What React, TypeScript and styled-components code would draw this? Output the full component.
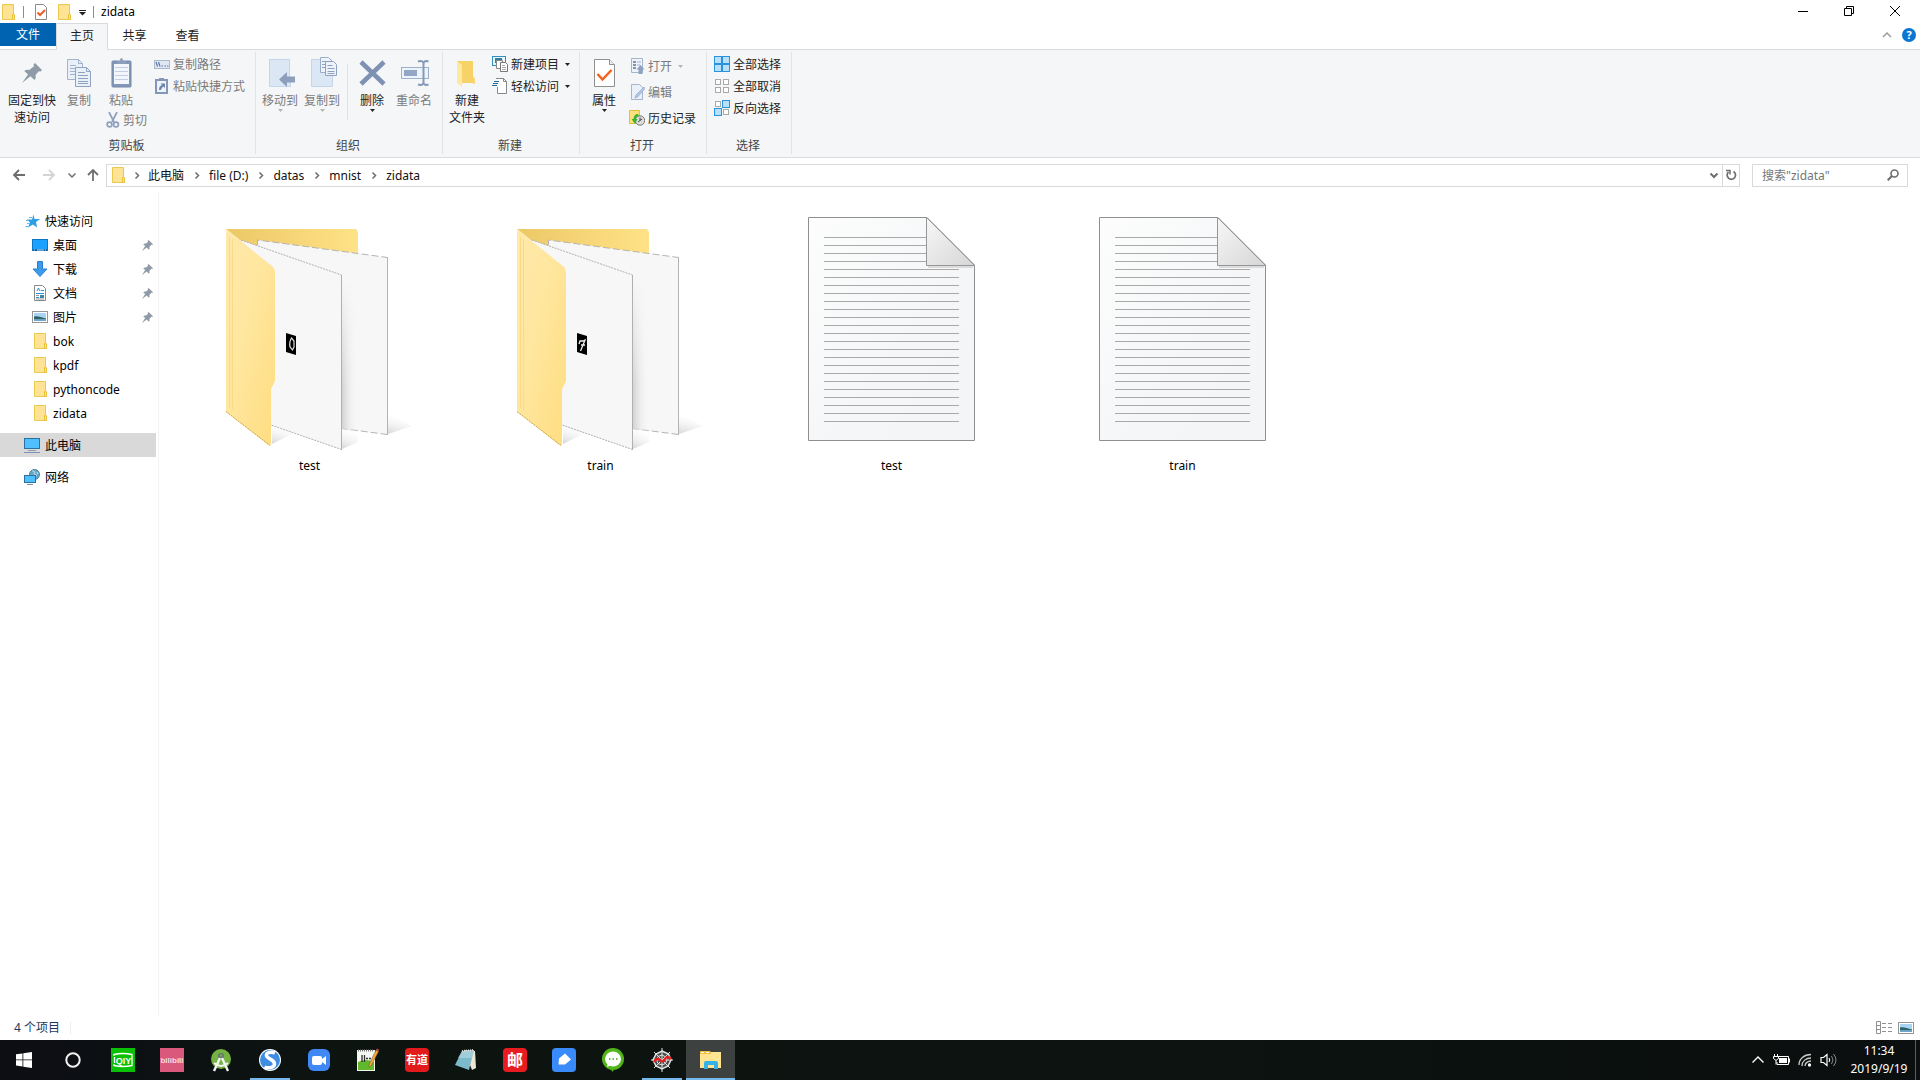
import React from 'react';
import styled, { createGlobalStyle, css } from 'styled-components';

const GlobalStyle = createGlobalStyle`
  * { box-sizing: border-box; }
  html, body { margin: 0; padding: 0; }
  body, button, input {
    font-family: "Noto Sans", "Noto Sans CJK SC", sans-serif;
    font-size: 12px;
  }
  body { color: #000; }
  button { border: 0; padding: 0; margin: 0; background: none; color: inherit; line-height: 17px; cursor: default; }
  svg { display: block; flex: none; }
  a { color: inherit; text-decoration: none; }
  ul { list-style: none; margin: 0; padding: 0; }
`;

/* ---------- small drawings ---------- */

const FolderIcon = () => (
  <svg width="16" height="18" viewBox="0 0 16 18">
    <path d="M2.500 1.500h11v11l1 .5v3.500h-12z" fill="#ffe394" stroke="#ebc850" />
    <path d="M12.500 16.500V12l1-1.500 1 1.500v4.500z" fill="#ffe394" stroke="#e8c13c" />
  </svg>
);

const PropertiesIcon = () => (
  <svg width="32" height="32" viewBox="0 0 32 32">
    <path d="M6.500 2.500h15l5 5v22h-20z" fill="#fff" stroke="#8f8f8f" />
    <path d="M21.500 2.500v5h5" fill="#eee" stroke="#8f8f8f" />
    <path d="M9.500 17l5 5.500 9-9.500" fill="none" stroke="#f8601c" strokeWidth="2.500" />
  </svg>
);

const PinShape = ({ size }: { size: number }) => (
  <svg width={size} height={size} viewBox="0 0 20 20">
    <path d="M12 0l8 7.500-1.500 1.500-1.700-.3-3.300 3.800c.6 2.300.2 4-1 5l-4-3.800L0 20l5.700-9L2.300 7.500c1.400-1.300 3-1.500 5-1L11 3.200l-.5-1.700z" fill="#8f9ba6" />
  </svg>
);

const PinLarge = () => (
  <svg width="32" height="32" viewBox="-6 -6 32 32">
    <path d="M13 0l7 7-1.500 1.500-1.700-.3-3.300 3.800c.6 2.300.2 4-1 5l-4-3.800L0 20l6-8.500L2.300 8c1.400-1.300 3-1.500 5-1L12 3.200l-.5-1.700z" fill="#8f9ba6" />
  </svg>
);

const CopyIcon = () => (
  <svg width="32" height="32" viewBox="0 0 32 32" fill="#eaf0f8" stroke="#a3b3cd">
    <path d="M4.500 2.500h11l4 4v16h-15z" />
    <path d="M15.500 2.500v4h4M7 8.500h6M7 11.500h6M7 14.500h6M7 17.500h5" fill="none" />
    <path d="M12.500 10.500h11l4 4v15h-15z" stroke="#8fa2c2" />
    <path d="M23.500 10.500v4h4M15 15.500h7M15 18.500h10M15 21.500h10M15 24.500h10M15 26.500h10" fill="none" stroke="#8fa2c2" />
  </svg>
);

const PasteIcon = () => (
  <svg width="32" height="32" viewBox="0 0 32 32">
    <rect x="7" y="4" width="19" height="26" rx="1" fill="#8497b8" stroke="#7389ad" />
    <rect x="9" y="7" width="15" height="20" fill="#f3f7fc" />
    <path d="M12 7V4h3c0-4 3-4 3 0h3v3z" fill="#8c9fbd" />
    <path d="M10 10.500h13M10 14.500h13M10 18.500h13M10 22.500h13" stroke="#c3cfe1" />
  </svg>
);

const ScissorsIcon = () => (
  <svg width="14" height="16" viewBox="0 0 14 16" fill="none" stroke="#8ea0bd" strokeWidth="1.700">
    <path d="M3 0l5 10M11 0L6 10" />
    <circle cx="3.500" cy="12.500" r="2.400" />
    <circle cx="10" cy="12.500" r="2.400" />
  </svg>
);

const PathIcon = () => (
  <svg width="16" height="16" viewBox="0 0 16 16">
    <rect x=".5" y="4.500" width="15" height="8" fill="#dfe7f3" stroke="#aab9d0" />
    <path d="M2 6l1.500 4.500M4.500 6L6 10.500M7.500 10H9M10.500 10H12M13 10h1.500" stroke="#5f78a4" strokeWidth="1.200" />
  </svg>
);

const ShortcutIcon = () => (
  <svg width="16" height="16" viewBox="0 0 16 16">
    <rect x="2" y="2" width="11" height="13" fill="#eef3fa" stroke="#8497b8" strokeWidth="2" />
    <rect x="5" y="0" width="5" height="3" fill="#8497b8" />
    <path d="M5 12c0-3 1-4 3-5L6.500 5.500H11V10L9.500 8.500C8 9.500 7.500 10.500 7 12z" fill="#6d84ab" />
  </svg>
);

const MoveToIcon = () => (
  <svg width="32" height="32" viewBox="1 0 32 32">
    <path d="M6.500 2.500h20v16l1 1v10h-21z" fill="#dce7f5" stroke="#c6d5e9" />
    <path d="M16 22.500l8-7.500v4.500h8v6h-8V30z" fill="#8d9fbd" />
  </svg>
);

const CopyToIcon = () => (
  <svg width="32" height="32" viewBox="1 0 32 32">
    <path d="M6.500 2.500h20v16l1 1v10h-21z" fill="#dce7f5" stroke="#c6d5e9" />
    <path d="M15.500.5h8l3 3v12h-11z" fill="#eef3fa" stroke="#9badc9" />
    <path d="M20.500 4.500h8l3 3v11h-11z" fill="#eef3fa" stroke="#8ea1c0" />
    <path d="M17 4.500h4M17 7.500h3M17 10.500h3M22.500 8.500h5M22.500 11.500h7M22.500 14.500h7M22.500 16.500h7" stroke="#8ea1c0" />
  </svg>
);

const DeleteIcon = () => (
  <svg width="32" height="32" viewBox="0 0 32 32">
    <path d="M5 5l23 22M28 5L5 27" stroke="#7e91b3" strokeWidth="4.500" />
  </svg>
);

const RenameIcon = () => (
  <svg width="32" height="32" viewBox="0 0 32 32">
    <rect x="3.500" y="10.500" width="27" height="11" fill="#edf3fa" stroke="#9fb0ca" />
    <rect x="6" y="13" width="13" height="6" fill="#93a6c4" />
    <path d="M25.500 5v22M20 4.500c3-1 5 0 5.500 1.500.5-1.500 2.500-2.500 5-1.500M20 27.500c3 1 5 0 5.500-1.500.5 1.500 2.500 2.500 5 1.500" fill="none" stroke="#8598b9" strokeWidth="2" />
  </svg>
);

const NewFolderIcon = () => (
  <svg width="32" height="32" viewBox="2 0 32 32">
    <path d="M8 4h16v16l2 2v4H10z" fill="#f6d267" />
    <path d="M8 4l5 4v22l-5-4z" fill="#ffe8a0" />
    <path d="M13 27h11v-8l2 3v5" fill="#f9d876" />
  </svg>
);

const NewItemIcon = () => (
  <svg width="16" height="16" viewBox="0 0 16 16">
    <rect x=".5" y=".5" width="13" height="9" fill="#e7f5fd" stroke="#2f8fbf" />
    <rect x="3" y="2" width="7" height="5" fill="#3a7c94" />
    <path d="M4.500 4.500h6v8h-6z" fill="#fff" stroke="#888" />
    <path d="M8.500 6.500h5l2 2v7h-7z" fill="#fff" stroke="#777" />
    <path d="M10 9.500h3M10 11.500h4M10 13.500h4" stroke="#aaa" />
  </svg>
);

const EasyAccessIcon = () => (
  <svg width="16" height="16" viewBox="0 0 16 16">
    <path d="M5.500.5h6l3 3v12h-9z" fill="#fff" />
    <path d="M4 .5h7.500l3 3v12h-9V9M11.500.5v3h3" fill="none" stroke="#888" />
    <path d="M2 3.500h5M1 5.500h5M0 7.500h5" stroke="#1c6ca1" />
  </svg>
);

const OpenIcon = () => (
  <svg width="16" height="16" viewBox="0 0 16 16">
    <path d="M2.500.5h11v14h-11z" fill="#eef3fa" stroke="#a5b5ce" />
    <path d="M4 4h3M4 7h3M4 10h3" stroke="#7f94b7" strokeWidth="2" />
    <path d="M8 4h4M8 7h3" stroke="#a5b5ce" />
    <path d="M11.500 7l4 4.500h-2V16h-4v-4.500h-2z" fill="#8ea1c0" />
  </svg>
);

const EditIcon = () => (
  <svg width="16" height="16" viewBox="0 0 16 16">
    <path d="M2.500.5h8l3 3v12h-11z" fill="#e9f0f9" stroke="#a5b5ce" />
    <path d="M6 14l1-3 8-8 1 1.500-7.500 8.500z" fill="#b7c9e2" stroke="#8ea5c8" strokeWidth=".7" />
  </svg>
);

const HistoryIcon = () => (
  <svg width="16" height="16" viewBox="0 0 16 16">
    <path d="M.5.5h10v13H.5z" fill="#ffe17b" stroke="#e3bd3b" />
    <circle cx="11" cy="10.500" r="4.700" fill="#ddd" stroke="#777" />
    <path d="M11 7.500v3l-2 1.500M11 10.500l2-1.500" fill="none" stroke="#444" />
    <path d="M9 4C6 4 4.500 6 4.500 9H2.500l3.500 5 2.500-5H7c0-2 .8-3 3-3z" fill="#3bb32e" />
  </svg>
);

const TileIcon = ({ on }: { on: boolean[] }) => (
  <svg width="16" height="16" viewBox="0 0 16 16">
    {on.map((active, i) => {
      const x = (i % 2) * 8;
      const y = Math.floor(i / 2) * 8;
      return active ? (
        <rect key={i} x={x + 0.5} y={y + 0.5} width="7" height="7" fill="#b9e0fb" stroke="#2b93dd" />
      ) : (
        <rect key={i} x={x + 1.5} y={y + 1.5} width="5" height="5" fill="#fff" stroke="#a9a9a9" />
      );
    })}
  </svg>
);

const Caret = ({ faint }: { faint?: boolean }) => (
  <svg width="5" height="3" viewBox="0 0 5 3">
    <path d="M0 0h5L2.500 3z" fill={faint ? '#b4b4b4' : '#222'} />
  </svg>
);

const Chevron = ({ dir, w = 2 }: { dir: 'right' | 'down' | 'up'; w?: number }) => {
  const d = { right: 'M3.500 2.500L6.500 5.500 3.500 8.500', down: 'M1.500 3.500L5 7 8.500 3.500', up: 'M1 7L5 3 9 7' }[dir];
  return (
    <svg width="10" height="10" viewBox="0 0 10 10">
      <path d={d} fill="none" stroke="currentColor" strokeWidth={w} />
    </svg>
  );
};

const Arrow = ({ dir }: { dir: 'left' | 'right' | 'up' }) => {
  const turn = { left: 0, up: 90, right: 180 }[dir];
  return (
    <svg width="14" height="14" viewBox="0 0 14 14">
      <path d="M13 7H2M7 2L2 7l5 5" fill="none" stroke="currentColor" strokeWidth="1.800" transform={`rotate(${turn} 7 7)`} />
    </svg>
  );
};

const StarIcon = () => (
  <svg width="16" height="16" viewBox="0 0 16 16">
    <path d="M9.500 1.500l1 4.500H16l-4 3 1 5.500L9 11.500l-5 3 2-5L3 6.500h5z" fill="#2b9ee8" />
    <path d="M5 4.500h3M2 7.500h3M3 10.500h3M1.500 13.500H5" stroke="#62b9f0" />
  </svg>
);

const DesktopIcon = () => (
  <svg width="16" height="16" viewBox="0 0 16 16">
    <rect x=".5" y="2.500" width="15" height="11" fill="#1ba1ff" stroke="#0c77c6" />
    <path d="M1 13h14" stroke="#063a66" />
    <path d="M2 13h1M5 13h7M13 13h1" stroke="#bfe3ff" />
  </svg>
);

const DownloadIcon = () => (
  <svg width="16" height="16" viewBox="0 0 16 16">
    <path d="M5.500.5h5V8h4.500L8 15.500 1 8h4.500z" fill="#3b9aeb" stroke="#2a80cf" />
  </svg>
);

const DocumentIcon = () => (
  <svg width="16" height="16" viewBox="0 0 16 16">
    <path d="M2.500.5h8l3 3v12h-11z" fill="#fff" stroke="#8a8a8a" />
    <path d="M5 6l1.500-3L8 6M9 5.500h3M4 8.500h8M4 12.500h3" fill="none" stroke="#2f8fd0" />
    <path d="M4 10.500h3M4 14h8" stroke="#999" />
    <rect x="8" y="10" width="4" height="3" fill="#3b86a8" />
  </svg>
);

const PictureIcon = () => (
  <svg width="16" height="16" viewBox="0 0 16 16">
    <rect x=".5" y="2.500" width="15" height="11" fill="#fff" stroke="#969696" />
    <rect x="2" y="4" width="12" height="8" fill="#a9d3f5" />
    <path d="M2 7.500c4-1 7 1 12 2v1H2z" fill="#2c6465" />
    <path d="M2 10.500h12V12H2z" fill="#6fa6cf" />
  </svg>
);

const ComputerIcon = () => (
  <svg width="16" height="16" viewBox="0 0 16 16">
    <rect x=".5" y="1.500" width="15" height="10" fill="#4fc0ff" stroke="#2a719c" />
    <path d="M4 13.500h8" stroke="#8aa0b5" />
    <path d="M0 15.500h16" stroke="#7d92b2" />
  </svg>
);

const NetworkIcon = () => (
  <svg width="16" height="16" viewBox="0 0 16 16">
    <circle cx="10.500" cy="5.500" r="5" fill="#66a9c9" stroke="#4a7f9e" />
    <path d="M8 1.500l3 1.500-1 2 3 1.500M13 3l1 2" stroke="#c2e0ee" fill="none" />
    <rect x=".5" y="6.500" width="11" height="7" fill="#4fc0ff" stroke="#2a719c" />
    <path d="M3 15.500h6" stroke="#7d92b2" />
  </svg>
);

/* ---------- large thumbnails ---------- */

const FolderThumb = ({ id, digit }: { id: string; digit: React.ReactNode }) => (
  <svg width="256" height="256" viewBox="1 0 256 256">
    <defs>
      <linearGradient id={`${id}-back`} x1="0" x2="1" y1="0" y2="0">
        <stop offset="0" stopColor="#ecc866" />
        <stop offset="1" stopColor="#ffe287" />
      </linearGradient>
      <linearGradient id={`${id}-front`} x1="0" x2="1" y1="0" y2="1">
        <stop offset="0" stopColor="#ffe9ab" />
        <stop offset=".4" stopColor="#ffe7a0" />
        <stop offset="1" stopColor="#ffdd80" />
      </linearGradient>
      <linearGradient id={`${id}-side`} x1="0" x2="1" y1="0" y2="0">
        <stop offset="0" stopColor="#d2d2d2" />
        <stop offset="1" stopColor="#f7f7f7" stopOpacity="0" />
      </linearGradient>
      <linearGradient id={`${id}-mask`} x1="0" x2="0" y1="0" y2="1">
        <stop offset="0" stopColor="#f7f7f7" />
        <stop offset=".7" stopColor="#f7f7f7" stopOpacity="0" />
      </linearGradient>
      <linearGradient id={`${id}-floor`} x1=".3" x2=".6" y1="1" y2="0">
        <stop offset="0" stopColor="#dcdcdc" />
        <stop offset="1" stopColor="#fff" stopOpacity="0" />
      </linearGradient>
    </defs>
    <path d="M207 212l24 12-24 8z" fill={`url(#${id}-floor)`} />
    <path d="M161 225l16 3v12l-16 7z" fill={`url(#${id}-floor)`} />
    <path d="M91 222l24 8-24 12z" fill={`url(#${id}-floor)`} />
    <path d="M45 27h130l2 3v25H80z" fill={`url(#${id}-back)`} />
    <path d="M76.500 43v-5l130 17.500v177l-46-6z" fill="#f7f7f7" />
    <path d="M76.500 43v-5l130 17.500M206.500 232.500l-46-6" fill="none" stroke="#b4b4b4" strokeDasharray="7 3" />
    <path d="M206.500 55v178" stroke="#b4b4b4" />
    <path d="M161 78h16v152l-16-3z" fill={`url(#${id}-side)`} />
    <path d="M161 78h16v152l-16-3z" fill={`url(#${id}-mask)`} />
    <path d="M60 38l100.500 35v174.500L90 223 60 200z" fill="#f7f7f7" />
    <path d="M60 38l100.500 35M160.500 247.500L90 223" stroke="#b0b0b0" strokeDasharray="2 1" />
    <path d="M160.500 73v175" stroke="#b0b0b0" />
    <path d="M45 27l47 38q2 2 2 5v109l-4 8v54q0 3-2 2.500L45 210z" fill={`url(#${id}-front)`} />
    <path d="M48.500 35v171M51.500 37v171" stroke="#f8db83" />
    <path d="M45 209.500l44 34" stroke="#c8a654" strokeDasharray="2 1" />
    <path d="M105 131l10 3v19l-10-3z" fill="#000" />
    {digit}
  </svg>
);

const RULES = Array.from({ length: 24 }, (_, i) => 35.5 + i * 8);

const TextThumb = ({ id }: { id: string }) => (
  <svg width="256" height="256" viewBox="0 0 256 256">
    <defs>
      <linearGradient id={`${id}-sheet`} x1="0" x2="1" y1="0" y2="1">
        <stop offset="0" stopColor="#fcfdfc" />
        <stop offset=".6" stopColor="#f5f6f8" />
        <stop offset="1" stopColor="#f4f5f7" />
      </linearGradient>
      <linearGradient id={`${id}-fold`} x1="0" x2="1" y1="0" y2="1">
        <stop offset="0" stopColor="#f7f7f7" />
        <stop offset="1" stopColor="#d6d6d6" />
      </linearGradient>
    </defs>
    <path d="M44.500 15.500H163l47.500 47.500v175.500h-166z" fill={`url(#${id}-sheet)`} stroke="#8f8f8f" />
    {RULES.map((y, i) => (
      <path key={y} d={`M60 ${y}H${i < 4 ? 162 : 195}`} stroke="#a9a9a9" />
    ))}
    <path d="M164 65h45" stroke="#dcdcdc" strokeWidth="2" />
    <path d="M162.500 15.500v48h48z" fill={`url(#${id}-fold)`} stroke="#979797" />
  </svg>
);

/* ---------- window chrome ---------- */

const Screen = styled.div`
  min-height: 100vh;
  display: flex;
  flex-direction: column;
  background: #fff;
`;

const TitleBar = styled.header`
  height: 23px;
  display: flex;
  align-items: center;
  padding-right: 2px;
`;

const QuickTools = styled.div`
  display: flex;
  align-items: center;
  gap: 7px;
  flex: 1;
`;

const ToolDivider = styled.span`
  width: 1px;
  height: 12px;
  background: #8c8c8c;
`;

const WindowTitle = styled.h1`
  margin: 0;
  font-size: 12px;
  font-weight: 400;
  line-height: 17px;
`;

const WindowButton = styled.button`
  width: 46px;
  height: 22px;
  display: grid;
  place-items: center;
`;

const TabRow = styled.nav`
  height: 27px;
  display: flex;
  border-bottom: 1px solid #dadbdc;
`;

const Tab = styled.button<{ $kind?: 'file' | 'active' }>`
  width: 53px;
  height: 26px;
  padding-bottom: 2px;
  color: #222;
  ${({ $kind }) => $kind === 'file' && css`
    width: 56px;
    height: 23px;
    padding: 0;
    color: #fff;
    background: #0063b1;
  `}
  ${({ $kind }) => $kind === 'active' && css`
    width: 52px;
    height: 27px;
    padding-bottom: 4px;
    background: #f5f6f7;
    border: 1px solid #dadbdc;
    border-bottom: 0;
  `}
`;

const TabTools = styled.div`
  margin-left: auto;
  display: flex;
  align-items: center;
  gap: 10px;
  padding: 0 4px 2px 0;
  color: #9a9a9a;
`;

const Ribbon = styled.section`
  height: 108px;
  display: flex;
  padding: 2px 0 3px;
  background: #f5f6f7;
  border-bottom: 1px solid #dadbdc;
`;

const Group = styled.div<{ $width: number }>`
  width: ${({ $width }) => $width}px;
  display: flex;
  flex-direction: column;
  border-right: 1px solid #e2e3e4;
`;

const GroupBody = styled.div<{ $inset?: number }>`
  flex: 1;
  display: flex;
  align-items: flex-start;
  padding: 1px 0 0 ${({ $inset = 0 }) => $inset}px;
`;

const GroupLabel = styled.div`
  height: 17px;
  padding-right: 2px;
  line-height: 17px;
  text-align: center;
  color: #444;
`;

const LargeButton = styled.button<{ $width?: number; $dim?: boolean }>`
  width: ${({ $width = 42 }) => $width}px;
  display: flex;
  flex-direction: column;
  align-items: center;
  padding-top: 4px;
  color: ${({ $dim }) => ($dim ? '#7b7b7b' : '#222')};
  white-space: nowrap;
  span { margin-top: 3px; }
`;

const Stack = styled.div`
  display: flex;
  flex-direction: column;
  align-items: flex-start;
`;

const SmallButton = styled.button<{ $height?: number; $indent?: number; $dim?: boolean }>`
  height: ${({ $height = 22 }) => $height}px;
  display: flex;
  align-items: center;
  gap: 3px;
  padding-left: ${({ $indent = 4 }) => $indent}px;
  white-space: nowrap;
  color: ${({ $dim }) => ($dim ? '#7b7b7b' : '#222')};
  span + svg { margin-left: 3px; }
`;

const InnerDivider = styled.span`
  width: 1px;
  height: 56px;
  margin: 11px 3px 0 4px;
  background: #dfe0e1;
`;

const AddressRow = styled.div`
  height: 34px;
  display: flex;
  align-items: center;
  padding: 0 12px 0 4px;
  color: #6e6e6e;
`;

const NavButton = styled.button<{ $width: number; $faint?: boolean }>`
  width: ${({ $width }) => $width}px;
  height: 22px;
  display: grid;
  place-items: center;
  color: ${({ $faint }) => ($faint ? '#d4d4d4' : '#6e6e6e')};
`;

const AddressBox = styled.div`
  flex: 1;
  height: 23px;
  display: flex;
  align-items: center;
  padding-left: 3px;
  border: 1px solid #d9d9d9;
`;

const Crumbs = styled.ul`
  flex: 1;
  display: flex;
  li { display: flex; align-items: center; line-height: 17px; }
  a { color: #111; }
`;

const CrumbChevron = styled.span`
  width: 25px;
  display: grid;
  place-items: center;
  li:first-child > & { width: 22px; }
`;

const RefreshButton = styled(NavButton)`
  border-left: 1px solid #d9d9d9;
`;

const SearchBox = styled.label`
  width: 156px;
  height: 23px;
  margin-left: 12px;
  display: flex;
  align-items: center;
  padding: 0 8px 0 9px;
  border: 1px solid #d9d9d9;
  input {
    flex: 1;
    min-width: 0;
    height: 17px;
    padding: 0;
    border: 0;
    outline: 0;
    background: none;
  }
  input::placeholder { color: #767676; opacity: 1; }
`;

/* ---------- body ---------- */

const Body = styled.div`
  flex: 1;
  display: flex;
`;

const Sidebar = styled.nav`
  width: 159px;
  padding: 17px 2px 0 0;
  border-right: 1px solid #f3f3f3;
`;

const SideGroup = styled.ul`
  margin-bottom: 8px;
`;

const SideItem = styled.a<{ $child?: boolean; $selected?: boolean }>`
  height: 24px;
  display: flex;
  align-items: center;
  gap: 5px;
  padding: 0 3px 0 ${({ $child }) => ($child ? 32 : 24)}px;
  background: ${({ $selected }) => ($selected ? '#d9d9d9' : 'transparent')};
  line-height: 17px;
  span { flex: 1; }
`;

const FileGrid = styled.main`
  flex: 1;
  display: grid;
  grid-template-columns: repeat(auto-fill, 291px);
  align-content: start;
  padding: 10px 0 0 5px;
`;

const FileTile = styled.a`
  display: flex;
  flex-direction: column;
  align-items: center;
  line-height: 15px;
`;

const StatusBar = styled.footer`
  height: 24px;
  display: flex;
  align-items: center;
  gap: 6px;
  padding: 0 6px 0 14px;
  color: #1e395b;
`;

const StatusText = styled.span`
  padding-right: 10px;
  border-right: 1px solid #ededed;
  margin-right: auto;
  line-height: 12px;
`;

/* ---------- taskbar ---------- */

const Taskbar = styled.nav`
  height: 40px;
  display: flex;
  background: linear-gradient(90deg, #0d0e14, #0c1410 18%, #0c1310 60%, #0b0f0f);
`;

const TaskButton = styled.button<{ $running?: boolean; $focused?: boolean }>`
  width: 49px;
  height: 40px;
  display: grid;
  place-items: center;
  background: ${({ $focused }) => ($focused ? '#3d4241' : 'none')};
  ${({ $running }) => $running && css`
    background-image: linear-gradient(#76b9ed, #76b9ed);
    background-size: 40px 2px;
    background-position: center bottom;
    background-repeat: no-repeat;
  `}
  ${({ $focused }) => $focused && css`
    background-size: 100% 2px;
  `}
`;

const Tray = styled.div`
  margin-left: auto;
  display: flex;
  align-items: center;
  gap: 8px;
  padding-right: 4px;
  color: #fff;
`;

const Clock = styled.time`
  width: 68px;
  text-align: center;
  line-height: 18px;
`;

const DesktopEdge = styled.span`
  width: 1px;
  height: 40px;
  margin-left: -6px;
  background: #5a5e5d;
`;

const taskIcons: { name: string; running?: boolean; focused?: boolean; art: React.ReactNode }[] = [
  { name: '开始', art: (
    <svg width="18" height="16" viewBox="0 0 18 16"><path d="M0 2.300l6.500-.9v6.100H0zM7.300 1.300L16 0v7.500H7.300zM0 8.300h6.500v6.200L0 13.600zM7.300 8.300H16V16l-8.700-1.300z" fill="#fff" /></svg>
  ) },
  { name: 'Cortana', art: (
    <svg width="20" height="18" viewBox="0 0 20 18"><circle cx="9" cy="9" r="6.700" fill="none" stroke="#f2f2f2" strokeWidth="2" /></svg>
  ) },
  { name: '爱奇艺', art: (
    <svg width="24" height="24" viewBox="0 0 24 24"><rect width="24" height="24" fill="#0bbe06" /><path d="M3 8V6.500q9-2 18 0V8M3 16v1.500q9 2 18 0V16M3.500 9v6M21 8v8" fill="none" stroke="#fff" strokeWidth="1.300" /><text x="12.500" y="15.500" fontSize="9" fontWeight="700" fontFamily="Liberation Sans, sans-serif" fill="#fff" textAnchor="middle">QIY</text></svg>
  ) },
  { name: '哔哩哔哩', art: (
    <svg width="24" height="24" viewBox="0 0 24 24"><rect width="24" height="24" fill="#d9587b" /><text x="12" y="15" fontSize="8" fontWeight="700" fontFamily="Liberation Sans, sans-serif" fill="#f8dce4" textAnchor="middle">bilibili</text></svg>
  ) },
  { name: 'Android Studio', art: (
    <svg width="24" height="24" viewBox="0 0 24 24"><circle cx="12" cy="11" r="10" fill="#74b341" /><circle cx="12" cy="8" r="3" fill="#687076" /><path d="M11 10L5 23M13 10l6 13" stroke="#f4f4f4" strokeWidth="2.400" /><path d="M5 15q7 6 14 0" fill="none" stroke="#f4f4f4" strokeWidth="2" /><circle cx="12" cy="7.500" r="1.300" fill="#74b341" /></svg>
  ) },
  { name: '搜狗浏览器', running: true, art: (
    <svg width="24" height="24" viewBox="0 0 24 24"><circle cx="12" cy="12" r="11" fill="#fff" /><circle cx="12" cy="12" r="10" fill="#3e8de2" /><path d="M17 5c-5-2-9 0-8.500 3 .5 3 8 3 8 8 0 3-5 5-10 3" fill="none" stroke="#fff" strokeWidth="3.500" /></svg>
  ) },
  { name: '会议', art: (
    <svg width="24" height="24" viewBox="0 0 24 24"><rect x="1" y="1" width="22" height="22" rx="6" fill="#4088f5" /><rect x="5" y="8" width="10" height="9" rx="2" fill="#fff" /><path d="M15 11l4-3v9l-4-3z" fill="#fff" /></svg>
  ) },
  { name: '编辑器', art: (
    <svg width="24" height="24" viewBox="0 0 24 24"><path d="M1 2h18v21H1z" fill="#f4f7f0" /><path d="M2 14q8-4 16 0v8H2z" fill="#62b82c" /><path d="M2 2.500h16" stroke="#777" strokeDasharray="1 1" strokeWidth="2" /><path d="M6 7v7M8.500 7v7M10 10.500h2M13 10.500h2" stroke="#333" strokeWidth="1.300" /><path d="M13 17L20 2l2.500 1.500L15 18l-2 1z" fill="#f1a93a" stroke="#865c26" strokeWidth=".6" /><path d="M20 2l1-1.500 2 1-.7 2z" fill="#b44" /></svg>
  ) },
  { name: '有道词典', art: (
    <svg width="24" height="24" viewBox="0 0 24 24"><rect width="24" height="24" rx="4" fill="#e21a1c" /><text x="12" y="16" fontSize="11" fontWeight="700" fontFamily="Noto Sans CJK SC, sans-serif" fill="#fff" textAnchor="middle">有道</text></svg>
  ) },
  { name: '记事本', art: (
    <svg width="24" height="24" viewBox="0 0 24 24"><path d="M10 2l11 1 1 17-4 2z" fill="#ede6d2" /><path d="M8 3l12-1-5 20L1 17z" fill="#7cb9cb" /><path d="M8 3l12-1-2 8L4 10z" fill="#b8dbe3" opacity=".6" /><path d="M8 3l12-1" stroke="#ddd" strokeDasharray="1 1" strokeWidth="2" /></svg>
  ) },
  { name: '邮箱大师', art: (
    <svg width="24" height="24" viewBox="0 0 24 24"><rect width="24" height="24" rx="4" fill="#e81c20" /><text x="12" y="18" fontSize="16" fontWeight="700" fontFamily="Noto Sans CJK SC, sans-serif" fill="#fff" textAnchor="middle">邮</text></svg>
  ) },
  { name: '笔记', art: (
    <svg width="24" height="24" viewBox="0 0 24 24"><rect width="24" height="24" rx="4" fill="#3a8bfa" /><path d="M13 5.500l6 6-6 5H6.500L7 10.500z" fill="#fff" /></svg>
  ) },
  { name: '聊天', art: (
    <svg width="24" height="24" viewBox="0 0 24 24"><circle cx="12" cy="11" r="11" fill="#51b518" /><path d="M8 20l4 4 1-4z" fill="#51b518" /><ellipse cx="12" cy="11" rx="8" ry="7.500" fill="#fff" /><path d="M7 15l-1 4 5-2z" fill="#fff" /><path d="M8 11h1.500M11.500 11H13M15 11h1.500" stroke="#4aa51a" strokeWidth="1.500" /></svg>
  ) },
  { name: 'Spyder', running: true, art: (
    <svg width="24" height="24" viewBox="0 0 24 24" fill="none" stroke="#e4e4e4"><path d="M12 3l6.500 3 2.500 6-3 6-6 3-6-3-3-6 3-6z" fill="#444b4b" strokeWidth="1.500" /><path d="M12 0v24M1 12h22M4 4l16 16M20 4L4 20" /><path d="M12 7l4 2 1 3-1.500 3.500L12 17l-4-1.500L6.500 12 8 8.500z" /><path d="M4 14q3-5 6-2t5-1 6 0" stroke="#e52222" strokeWidth="2.600" /></svg>
  ) },
  { name: '文件资源管理器', running: true, focused: true, art: (
    <svg width="24" height="24" viewBox="0 0 24 24"><path d="M1 3h9l2 1h10v16H1z" fill="#ffe492" /><path d="M1 3h9l2 1v2H1z" fill="#f0bd3e" /><path d="M2 4.500h3M7 4.500h3" stroke="#fff" /><path d="M5 21v-6q0-2 2-2h10q2 0 2 2v6h-4v-4H9v4z" fill="#35b3e9" /></svg>
  ) },
];

const places: { name: string; icon: React.ReactNode; pinned?: boolean }[] = [
  { name: '桌面', icon: <DesktopIcon />, pinned: true },
  { name: '下载', icon: <DownloadIcon />, pinned: true },
  { name: '文档', icon: <DocumentIcon />, pinned: true },
  { name: '图片', icon: <PictureIcon />, pinned: true },
  { name: 'bok', icon: <FolderIcon /> },
  { name: 'kpdf', icon: <FolderIcon /> },
  { name: 'pythoncode', icon: <FolderIcon /> },
  { name: 'zidata', icon: <FolderIcon /> },
];

const crumbs = ['此电脑', 'file (D:)', 'datas', 'mnist', 'zidata'];

const files = [
  { name: 'test', thumb: <FolderThumb id="f1" digit={<path d="M110.500 136q-2.500 4-1.500 9l2.500 3 1.500-3v-6z" fill="none" stroke="#ddd" strokeWidth="1.200" />} /> },
  { name: 'train', thumb: <FolderThumb id="f2" digit={<path d="M107 142l1-3h3l2-1-2 5-2.500 6M109 143h4" fill="none" stroke="#eee" strokeWidth="1.300" />} /> },
  { name: 'test', thumb: <TextThumb id="t1" /> },
  { name: 'train', thumb: <TextThumb id="t2" /> },
];

export default function App() {
  return (
    <Screen>
      <GlobalStyle />
      <TitleBar>
        <QuickTools>
          <FolderIcon />
          <ToolDivider />
          <button aria-label="属性"><svg width="18" height="18" viewBox="-4 -1 18 18"><path d="M.5.5h8l3 3v12H.5z" fill="#fff" stroke="#8a8a8a" /><path d="M2.500 8.500l2.500 2.500 5-5" fill="none" stroke="#f1592a" strokeWidth="2" /></svg></button>
          <button aria-label="新建文件夹"><FolderIcon /></button>
          <button aria-label="自定义"><svg width="7" height="8" viewBox="0 0 7 8"><path d="M0 2.500h7" stroke="#222" /><path d="M0 4h7L3.500 7.500z" fill="#222" /></svg></button>
          <ToolDivider />
          <WindowTitle>zidata</WindowTitle>
        </QuickTools>
        <WindowButton aria-label="最小化"><svg width="10" height="12"><path d="M0 5.500h10" stroke="#000" /></svg></WindowButton>
        <WindowButton aria-label="还原"><svg width="10" height="12" fill="none" stroke="#000"><path d="M.5 2.500h7v7h-7zM2.500 2.500v-2h7v7h-2" /></svg></WindowButton>
        <WindowButton aria-label="关闭"><svg width="10" height="12"><path d="M0 0l10 10M10 0L0 10" stroke="#000" /></svg></WindowButton>
      </TitleBar>

      <TabRow>
        <Tab $kind="file">文件</Tab>
        <Tab $kind="active">主页</Tab>
        <Tab>共享</Tab>
        <Tab>查看</Tab>
        <TabTools>
          <button aria-label="折叠功能区"><Chevron dir="up" w={1.5} /></button>
          <button aria-label="帮助">
            <svg width="14" height="14" viewBox="0 0 14 14"><circle cx="7" cy="7" r="7" fill="#0a76d2" /><text x="7" y="11" fontSize="11" fontWeight="700" fill="#fff" textAnchor="middle">?</text></svg>
          </button>
        </TabTools>
      </TabRow>

      <Ribbon>
        <Group $width={256}>
          <GroupBody>
            <LargeButton $width={64}><PinLarge /><span>固定到快<br />速访问</span></LargeButton>
            <LargeButton $width={30} $dim><CopyIcon /><span>复制</span></LargeButton>
            <Stack>
              <LargeButton $width={54} $dim><PasteIcon /><span>粘贴</span></LargeButton>
              <SmallButton $indent={12} $dim><ScissorsIcon /><span>剪切</span></SmallButton>
            </Stack>
            <Stack>
              <SmallButton $indent={6} $dim><PathIcon />复制路径</SmallButton>
              <SmallButton $indent={6} $dim><ShortcutIcon />粘贴快捷方式</SmallButton>
            </Stack>
          </GroupBody>
          <GroupLabel>剪贴板</GroupLabel>
        </Group>
        <Group $width={187}>
          <GroupBody $inset={3}>
            <LargeButton $dim><MoveToIcon /><span>移动到</span><Caret faint /></LargeButton>
            <LargeButton $dim><CopyToIcon /><span>复制到</span><Caret faint /></LargeButton>
            <InnerDivider />
            <LargeButton><DeleteIcon /><span>删除</span><Caret /></LargeButton>
            <LargeButton $dim><RenameIcon /><span>重命名</span></LargeButton>
          </GroupBody>
          <GroupLabel>组织</GroupLabel>
        </Group>
        <Group $width={137}>
          <GroupBody $inset={3}>
            <LargeButton><NewFolderIcon /><span>新建<br />文件夹</span></LargeButton>
            <Stack>
              <SmallButton><NewItemIcon /><span>新建项目</span><Caret /></SmallButton>
              <SmallButton><EasyAccessIcon /><span>轻松访问</span><Caret /></SmallButton>
            </Stack>
          </GroupBody>
          <GroupLabel>新建</GroupLabel>
        </Group>
        <Group $width={127}>
          <GroupBody $inset={3}>
            <LargeButton><PropertiesIcon /><span>属性</span><Caret /></LargeButton>
            <Stack>
              <SmallButton $height={26} $dim><OpenIcon /><span>打开</span><Caret faint /></SmallButton>
              <SmallButton $height={26} $dim><EditIcon /><span>编辑</span></SmallButton>
              <SmallButton $height={26}><HistoryIcon /><span>历史记录</span></SmallButton>
            </Stack>
          </GroupBody>
          <GroupLabel>打开</GroupLabel>
        </Group>
        <Group $width={85}>
          <GroupBody $inset={3}>
            <Stack>
              <SmallButton><TileIcon on={[true, true, true, true]} /><span>全部选择</span></SmallButton>
              <SmallButton><TileIcon on={[false, false, false, false]} /><span>全部取消</span></SmallButton>
              <SmallButton><TileIcon on={[false, true, true, false]} /><span>反向选择</span></SmallButton>
            </Stack>
          </GroupBody>
          <GroupLabel>选择</GroupLabel>
        </Group>
      </Ribbon>

      <AddressRow>
        <NavButton $width={30} aria-label="后退"><Arrow dir="left" /></NavButton>
        <NavButton $width={30} $faint aria-label="前进"><Arrow dir="right" /></NavButton>
        <NavButton $width={16} aria-label="最近浏览"><Chevron dir="down" w={1.5} /></NavButton>
        <NavButton $width={26} aria-label="上移"><Arrow dir="up" /></NavButton>
        <AddressBox>
          <FolderIcon />
          <Crumbs>
            {crumbs.map((name) => (
              <li key={name}>
                <CrumbChevron><Chevron dir="right" w={1.5} /></CrumbChevron>
                <a href="#">{name}</a>
              </li>
            ))}
          </Crumbs>
          <NavButton $width={16} aria-label="历史地址"><Chevron dir="down" /></NavButton>
          <RefreshButton $width={17} aria-label="刷新">
            <svg width="12" height="12" viewBox="0 0 12 12"><path d="M8.500 2.500A4.200 4.200 0 1 1 3.500 3" fill="none" stroke="currentColor" strokeWidth="1.700" /><path d="M1 1.500h4v4" fill="none" stroke="currentColor" strokeWidth="1.500" /></svg>
          </RefreshButton>
        </AddressBox>
        <SearchBox>
          <input type="text" aria-label="搜索" placeholder={'搜索"zidata"'} />
          <svg width="12" height="12" viewBox="0 0 12 12"><circle cx="7.500" cy="4.500" r="3.500" fill="none" stroke="currentColor" strokeWidth="1.600" /><path d="M5 7L.7 11.300" stroke="currentColor" strokeWidth="2" /></svg>
        </SearchBox>
      </AddressRow>

      <Body>
        <Sidebar>
          <SideGroup>
            <li><SideItem href="#"><StarIcon /><span>快速访问</span></SideItem></li>
            {places.map((place) => (
              <li key={place.name}>
                <SideItem href="#" $child>
                  {place.icon}
                  <span>{place.name}</span>
                  {place.pinned && <PinShape size={11} />}
                </SideItem>
              </li>
            ))}
          </SideGroup>
          <SideGroup>
            <li><SideItem href="#" $selected><ComputerIcon /><span>此电脑</span></SideItem></li>
          </SideGroup>
          <SideGroup>
            <li><SideItem href="#"><NetworkIcon /><span>网络</span></SideItem></li>
          </SideGroup>
        </Sidebar>
        <FileGrid>
          {files.map((file, i) => (
            <FileTile key={i} href="#">
              {file.thumb}
              <span>{file.name}</span>
            </FileTile>
          ))}
        </FileGrid>
      </Body>

      <StatusBar>
        <StatusText>4 个项目</StatusText>
        <button aria-label="详细信息"><svg width="16" height="14" viewBox="0 0 16 14" fill="none" stroke="#8f8f8f"><path d="M.5.5h4v12h-4zM.5 4.500h4M.5 8.500h4M6 2.500h4M12 2.500h4M6 6.500h4M12 6.500h4M6 10.500h4M12 10.500h4" /></svg></button>
        <button aria-label="大图标"><PictureIcon /></button>
      </StatusBar>

      <Taskbar>
        {taskIcons.map((task) => (
          <TaskButton key={task.name} aria-label={task.name} $running={task.running} $focused={task.focused}>
            {task.art}
          </TaskButton>
        ))}
        <Tray>
          <svg width="14" height="14" viewBox="0 0 14 14"><path d="M1.500 9.500L7 4l5.500 5.500" fill="none" stroke="#fff" strokeWidth="1.400" /></svg>
          <svg width="17" height="14" viewBox="0 0 17 14"><path d="M5 3.500h10.500v8H4V9" fill="none" stroke="#fff" /><path d="M6 5h8v5H6z" fill="#fff" /><path d="M16.500 5.500v4M1.500 1v2M4.500 1v2M.5 3.500h5v2l-2 1.500h-1L.5 5.500zM3 7v4.500" stroke="#fff" fill="none" /></svg>
          <svg width="14" height="14" viewBox="0 0 14 14" fill="none" stroke="#c9c9c9" strokeWidth="1.300"><path d="M1 12C1 6 6 1.500 13 1.500M4 13c0-5 4-8 9-8M7 13c0-3 3-5 6-5" /><circle cx="11.500" cy="12" r="1" fill="#fff" stroke="#fff" /></svg>
          <svg width="17" height="14" viewBox="0 0 17 14" fill="none" stroke="#fff"><path d="M1 4.500h2.500L7 1.500v11L3.500 9.500H1zM9 5q1.500 2 0 4" strokeWidth="1.200" /><path d="M11.500 3q3 4 0 8M13.500 1q5 6 0 12" stroke="#888" /></svg>
          <Clock>11:34<br />2019/9/19</Clock>
          <DesktopEdge />
        </Tray>
      </Taskbar>
    </Screen>
  );
}
